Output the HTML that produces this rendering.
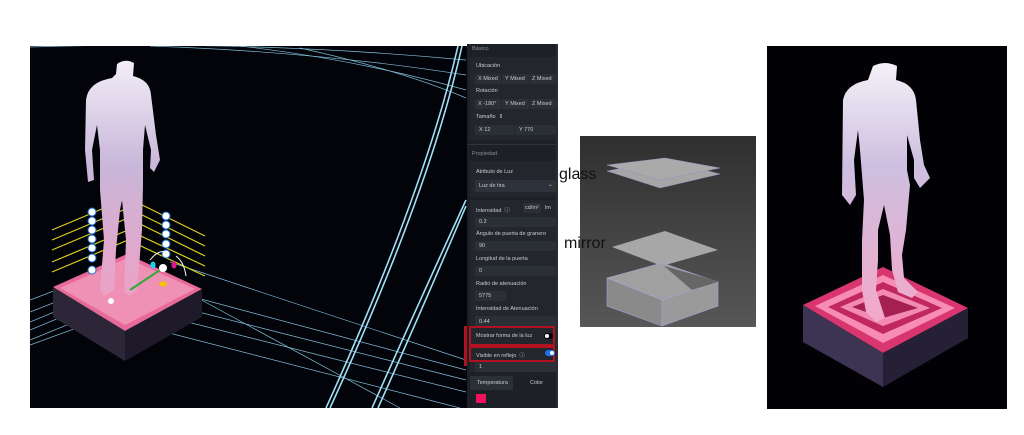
<!DOCTYPE html>
<html><head><meta charset="utf-8"><style>
*{margin:0;padding:0;box-sizing:border-box}
body{width:1024px;height:435px;background:#fff;position:relative;overflow:hidden;font-family:"Liberation Sans",sans-serif}
.abs{position:absolute}
#panel{left:467px;top:44px;width:91px;height:364px;background:#1d2026;color:#c9ccd2;font-size:5.5px}
#panel .t{position:absolute;white-space:nowrap}
.inp{position:absolute;background:#2b2f36;height:10px;border-radius:1px}
.sec{position:absolute;background:#23262d}
</style></head><body>

<!-- left viewport -->
<svg class="abs" style="left:30px;top:46px" width="437" height="362" viewBox="30 46 437 362">
<defs>
<linearGradient id="fl" x1="0" y1="0" x2="0" y2="1"><stop offset="0" stop-color="#f2eef8"/><stop offset="0.45" stop-color="#c9b6d9"/><stop offset="1" stop-color="#eca2c6"/></linearGradient>
<linearGradient id="fr" x1="0" y1="0" x2="0" y2="1"><stop offset="0" stop-color="#f4f1f8"/><stop offset="0.4" stop-color="#cdbfe0"/><stop offset="1" stop-color="#f3a8c9"/></linearGradient>
</defs>
<rect x="30" y="46" width="437" height="362" fill="#03030a"/>
<g stroke="#8fd3ee" stroke-width="0.7" fill="none" opacity="0.9">
<path d="M30 47 Q250 40 466 60"/><path d="M150 46 Q320 52 466 75"/><path d="M240 46 Q360 60 466 90"/><path d="M300 48 Q400 70 466 98"/>
<path d="M30 330 L160 276"/><path d="M30 340 L170 283"/><path d="M30 312 L150 265"/><path d="M30 322 L155 270"/><path d="M30 300 L140 258"/><path d="M30 345 L180 290"/>
<path d="M80 310 L460 408"/><path d="M100 300 L466 392"/><path d="M120 292 L466 380"/><path d="M130 280 L466 370"/><path d="M150 272 L400 408"/><path d="M170 262 L466 360"/>
</g>
<g stroke="#9fe0f5" stroke-width="1.6" fill="none">
<path d="M462 46 Q430 190 330 408"/><path d="M458 46 Q425 190 326 408"/>
<path d="M466 200 Q420 300 372 408"/><path d="M466 206 Q424 305 378 408"/>
</g>
<polygon points="53,287 127,254 202,289 125,331" fill="#e86a9a"/>
<polygon points="53,287 125,331 125,361 53,317" fill="#2d2638"/>
<polygon points="125,331 202,289 202,317 125,361" fill="#1e1a2a"/>
<polygon points="60,288 127,258 195,289 125,325" fill="#f2a1c0" opacity="0.7"/>
<g stroke="#d8d21e" stroke-width="1.2" fill="none">
<path d="M52 230 L128 198 L205 236"/><path d="M52 240 L128 208 L205 246"/><path d="M52 250 L128 218 L205 256"/><path d="M52 262 L128 230 L205 266"/><path d="M52 272 L128 240 L205 276"/>
</g>
<!-- figure -->
<path d="M117 64 Q125 58 134 63 L133 76 Q150 80 151 95 L156 135 L160 160 L154 172 L150 168 L151 150 L145 125 L143 150 L143 185 L142 230 L137 290 L130 296 L124 292 L126 240 L122 200 L120 210 L116 250 L114 290 L104 296 L100 290 L104 240 L100 190 L100 150 L97 125 L92 150 L94 180 L88 182 L85 150 L86 100 Q88 82 112 78 L116 74 Z" fill="url(#fl)"/>
<g fill="#fff" stroke="#1b6fd6" stroke-width="1">
<circle cx="92" cy="212" r="4"/><circle cx="92" cy="221" r="4"/><circle cx="92" cy="230" r="4"/><circle cx="92" cy="239" r="4"/><circle cx="92" cy="248" r="4"/><circle cx="92" cy="258" r="4"/><circle cx="92" cy="270" r="4"/>
<circle cx="166" cy="216" r="4"/><circle cx="166" cy="225" r="4"/><circle cx="166" cy="234" r="4"/><circle cx="166" cy="244" r="4"/><circle cx="166" cy="254" r="4"/>
</g>
<path d="M150 260 Q158 250 165 252" stroke="#fff" fill="none"/><path d="M176 256 Q184 262 186 276" stroke="#fff" fill="none"/>
<circle cx="111" cy="301" r="3" fill="#fff"/>
<path d="M160 270 L130 290" stroke="#2faa3a" stroke-width="2"/>
<circle cx="163" cy="268" r="4" fill="#fff"/>
<ellipse cx="153" cy="265" rx="2.5" ry="3.5" fill="#17d7ee"/><ellipse cx="174" cy="265" rx="2.5" ry="3.5" fill="#e0178e"/><ellipse cx="163" cy="284" rx="4" ry="2.5" fill="#f4c400"/>
<rect x="464" y="326" width="3" height="40" fill="#b0121f"/>
</svg>

<!-- panel -->
<div id="panel" class="abs">
<div class="t" style="left:5px;top:2px;color:#8a8f99">Básico</div>
<div class="sec" style="left:3px;top:13px;width:88px;height:83px"></div>
<div class="t" style="left:9px;top:19px">Ubicación</div>
<div class="inp" style="left:8px;top:30px;width:26px"></div><div class="inp" style="left:35px;top:30px;width:27px"></div><div class="inp" style="left:63px;top:30px;width:26px"></div>
<div class="t" style="left:11px;top:32px">X&nbsp;Mixed</div><div class="t" style="left:38px;top:32px">Y&nbsp;Mixed</div><div class="t" style="left:65px;top:32px">Z&nbsp;Mixed</div>
<div class="t" style="left:9px;top:44px">Rotación</div>
<div class="inp" style="left:8px;top:55px;width:26px"></div><div class="inp" style="left:35px;top:55px;width:27px"></div><div class="inp" style="left:63px;top:55px;width:26px"></div>
<div class="t" style="left:11px;top:57px">X&nbsp;-180°</div><div class="t" style="left:38px;top:57px">Y&nbsp;Mixed</div><div class="t" style="left:65px;top:57px">Z&nbsp;Mixed</div>
<div class="t" style="left:9px;top:70px">Tamaño&nbsp;&nbsp;⇕</div>
<div class="inp" style="left:8px;top:81px;width:39px"></div><div class="inp" style="left:48px;top:81px;width:41px"></div>
<div class="t" style="left:12px;top:83px">X 12</div><div class="t" style="left:52px;top:83px">Y 770</div>
<div class="abs" style="left:0;top:100px;width:91px;height:1px;background:#30343b"></div>
<div class="t" style="left:5px;top:107px;color:#8a8f99">Propiedad</div>
<div class="sec" style="left:3px;top:117px;width:88px;height:36px"></div>
<div class="t" style="left:9px;top:125px">Atributo de Luz</div>
<div class="inp" style="left:8px;top:136px;width:81px;height:12px;background:#2e323a"></div>
<div class="t" style="left:12px;top:139px">Luz de tira</div><div class="t" style="left:81px;top:138px">⌄</div>
<div class="sec" style="left:3px;top:156px;width:88px;height:172px"></div>
<div class="t" style="left:9px;top:162px">Intensidad&nbsp;&nbsp;ⓘ</div>
<div class="inp" style="left:56px;top:159px;width:18px"></div><div class="t" style="left:58px;top:161px">cd/m²</div><div class="t" style="left:78px;top:161px">lm</div>
<div class="inp" style="left:8px;top:173px;width:81px"></div><div class="t" style="left:12px;top:175px">0.2</div>
<div class="t" style="left:9px;top:187px">Ángulo de puerta de granero</div>
<div class="inp" style="left:8px;top:197px;width:81px"></div><div class="t" style="left:12px;top:199px">90</div>
<div class="t" style="left:9px;top:212px">Longitud de la puerta</div>
<div class="inp" style="left:8px;top:222px;width:81px"></div><div class="t" style="left:12px;top:224px">0</div>
<div class="t" style="left:9px;top:237px">Radio de atenuación</div>
<div class="inp" style="left:8px;top:247px;width:31px"></div><div class="t" style="left:12px;top:249px">5775</div>
<div class="t" style="left:9px;top:262px">Intensidad de Atenuación</div>
<div class="inp" style="left:8px;top:272px;width:81px"></div><div class="t" style="left:12px;top:275px">0.44</div>
<div class="abs" style="left:2px;top:282px;width:86px;height:20px;border:2px solid #b0121f"></div>
<div class="t" style="left:9px;top:289px">Mostrar forma de la luz</div>
<div class="abs" style="left:77px;top:289px;width:9px;height:6px;border-radius:3px;background:#000"></div><div class="abs" style="left:78px;top:290px;width:4px;height:4px;border-radius:2px;background:#fff"></div>
<div class="abs" style="left:2px;top:302px;width:86px;height:16px;border:2px solid #b0121f"></div>
<div class="t" style="left:9px;top:307px">Visible en reflejo&nbsp;&nbsp;ⓘ</div>
<div class="abs" style="left:78px;top:306px;width:10px;height:6px;border-radius:3px;background:#1f6fe6"></div><div class="abs" style="left:83px;top:307px;width:4px;height:4px;border-radius:2px;background:#fff"></div>
<div class="inp" style="left:8px;top:318px;width:81px"></div><div class="t" style="left:12px;top:320px">1</div>
<div class="abs" style="left:3px;top:332px;width:43px;height:14px;background:#2b2f36"></div>
<div class="t" style="left:10px;top:336px">Temperatura</div><div class="t" style="left:63px;top:336px">Color</div>
<div class="abs" style="left:9px;top:350px;width:10px;height:9px;background:#f0125a"></div>
<div class="abs" style="left:89px;top:0;width:2px;height:364px;background:#2a2d33"></div>
</div>

<!-- middle -->
<svg class="abs" style="left:580px;top:136px" width="176" height="191" viewBox="580 136 176 191">
<defs><linearGradient id="g" x1="0" y1="0" x2="0" y2="1"><stop offset="0" stop-color="#2f2f2f"/><stop offset="1" stop-color="#575757"/></linearGradient></defs>
<rect x="580" y="136" width="176" height="191" fill="url(#g)"/>
<polygon points="607,171 665,160 720,174 660,188" fill="#a6a6a6" stroke="#9a8fc4" stroke-width="0.5"/>
<polygon points="607,165 665,158 720,168 660,180" fill="#aaa" stroke="#9a8fc4" stroke-width="0.5"/>
<polygon points="612,247 665,231 718,250 662,266" fill="#a7a7a7"/>
<polygon points="607,278 662,263 718,282 662,300" fill="#a0a0a0" stroke="#b49cd8" stroke-width="0.6"/>
<polygon points="607,278 662,300 662,326 607,306" fill="#8a8a8a" stroke="#b49cd8" stroke-width="0.6"/>
<polygon points="662,300 718,282 718,306 662,326" fill="#9a9a9a" stroke="#b49cd8" stroke-width="0.6"/>
<polygon points="664,266 710,279 718,282 692,290" fill="#666"/>
</svg>
<div class="abs" style="left:559px;top:166px;font-size:16px;color:#111">glass</div>
<div class="abs" style="left:564px;top:235px;font-size:16px;color:#111">mirror</div>

<!-- right image -->
<svg class="abs" style="left:767px;top:46px" width="240" height="363" viewBox="767 46 240 363">
<defs><linearGradient id="fr2" x1="0" y1="0" x2="0" y2="1"><stop offset="0" stop-color="#f4f1f8"/><stop offset="0.4" stop-color="#cdbfe0"/><stop offset="1" stop-color="#f3a8c9"/></linearGradient></defs>
<rect x="767" y="46" width="240" height="363" fill="#020206"/>
<polygon points="803,305 883,267 968,308 883,353" fill="#d9366f"/>
<polygon points="815,306 883,275 955,308 883,343" fill="#f78cb4"/>
<polygon points="828,307 883,282 942,308 883,334" fill="#c0285e"/>
<polygon points="840,307 883,289 930,308 883,326" fill="#f38ab3"/>
<polygon points="852,307 883,295 918,308 883,318" fill="#a42050"/>
<polygon points="803,305 883,353 883,387 803,342" fill="#3d3352"/>
<polygon points="883,353 968,308 968,338 883,387" fill="#262036"/>
<path d="M873 66 Q885 60 897 66 L896 80 Q914 84 916 100 L920 140 L924 165 L930 178 L920 188 L914 178 L914 160 L907 135 L907 170 L910 185 L906 230 L902 255 L904 278 L918 292 L912 298 L898 292 L892 270 L890 235 L884 205 L878 230 L878 260 L876 290 L885 318 L876 322 L866 312 L862 290 L862 240 L864 200 L860 150 L858 130 L854 160 L856 195 L850 205 L842 195 L843 100 Q846 84 868 80 Z" fill="url(#fr2)"/>
</svg>
</body></html>
